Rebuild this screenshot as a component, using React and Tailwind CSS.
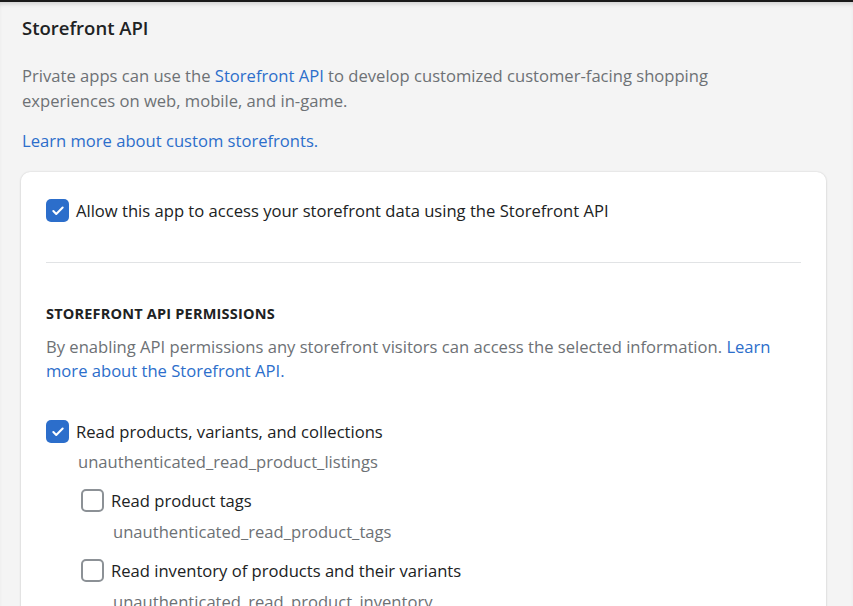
import { Check } from 'lucide-react'

const PERMS = [
  { label: 'Read products, variants, and collections', scope: 'unauthenticated_read_product_listings', checked: true, level: 0 },
  { label: 'Read product tags', scope: 'unauthenticated_read_product_tags', checked: false, level: 1 },
  { label: 'Read inventory of products and their variants', scope: 'unauthenticated_read_product_inventory', checked: false, level: 1 },
]

function Box({ checked }) {
  return checked ? (
    <span className="flex-shrink-0 w-[23px] h-[23px] rounded-[5px] bg-[#2c6ecb] flex items-center justify-center">
      <Check size={14} strokeWidth={3.5} className="text-white" />
    </span>
  ) : (
    <span className="flex-shrink-0 w-[23px] h-[23px] rounded-[5px] border-2 border-[#8c9196] bg-white" />
  )
}

export default function App() {
  return (
    <div className="min-h-[606px] bg-[#f4f4f4] text-[16.6px] text-[#202223] border-t-2 border-[#1a1a1a] shadow-[inset_0_4px_4px_-2px_rgba(0,0,0,0.15)] overflow-hidden"
      style={{ fontFamily: '"Open Sans", sans-serif' }}>
      <div className="pl-[22px] pr-[27px]">
        <h2 className="pt-[13px] text-[18.5px] leading-[26px] font-semibold">Storefront API</h2>

        <p className="mt-[22px] text-[#6d7175] leading-[25px] max-w-[720px]">
          Private apps can use the <span className="text-[#2c6ecb]">Storefront API</span> to develop customized customer-facing shopping experiences on web, mobile, and in-game.
        </p>
        <p className="mt-[15px] text-[#2c6ecb] leading-[25px]">Learn more about custom storefronts.</p>

        {/* Card */}
        <div className="mt-[19px] -ml-px bg-white rounded-[9px] shadow-[0_0_2px_rgba(0,0,0,0.15),0_1px_3px_rgba(0,0,0,0.08)] px-[25px] pt-[26px] pb-[40px]">
          <label className="flex items-center gap-[7px] leading-[25px]">
            <Box checked />
            <span>Allow this app to access your storefront data using the Storefront API</span>
          </label>

          <div className="mt-[39px] border-t border-[#e1e3e5]" />

          <h3 className="mt-[40px] text-[14.5px] font-bold leading-[22px] tracking-[0.2px]">STOREFRONT API PERMISSIONS</h3>
          <p className="mt-[10px] text-[#6d7175] leading-[24px]">
            By enabling API permissions any storefront visitors can access the selected information. <span className="text-[#2c6ecb]">Learn more about the Storefront API.</span>
          </p>

          <div className="mt-[36px] flex flex-col gap-[14px]">
            {PERMS.map(p => (
              <div key={p.scope} className={p.level ? 'pl-[35px]' : ''}>
                <label className="flex items-center gap-[7px] leading-[25px]">
                  <Box checked={p.checked} />
                  <span>{p.label}</span>
                </label>
                <p className={`pl-[32px] text-[#6d7175] leading-[25px] ${p.level ? 'mt-[6px]' : 'mt-[5px]'}`}>{p.scope}</p>
              </div>
            ))}
          </div>
        </div>
      </div>
    </div>
  )
}
